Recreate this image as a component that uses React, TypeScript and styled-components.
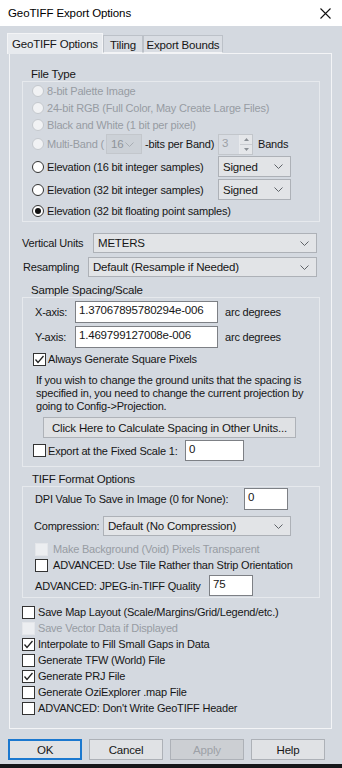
import React from "react";
import styled, { createGlobalStyle } from "styled-components";

const BG = "#d4d9e0";

const GlobalStyle = createGlobalStyle`
  html, body {
    margin: 0;
    padding: 0;
  }
  body {
    background: ${BG};
    font-family: "Liberation Sans", Arial, sans-serif;
    font-size: 11px;
    letter-spacing: -0.2px;
    color: #161616;
  }
  * {
    box-sizing: border-box;
  }
`;

const Window = styled.div`
  width: 342px;
  height: 768px;
  display: flex;
  flex-direction: column;
  overflow: hidden;
  background: ${BG};
`;

const TitleBar = styled.div`
  height: 26px;
  flex: none;
  background: #fff;
  display: flex;
  align-items: center;
  justify-content: space-between;
  padding: 0 11px 0 8px;
`;

const TitleText = styled.span`
  font-size: 11.5px;
  letter-spacing: -0.1px;
  color: #000;
`;

const Body = styled.div`
  flex: none;
  padding: 7px 0 0 9px;
`;

const TabStrip = styled.div`
  height: 20px;
  display: flex;
  align-items: flex-end;
`;

const Tab = styled.div<{ $active?: boolean; $w: number }>`
  width: ${(p) => p.$w}px;
  height: ${(p) => (p.$active ? 21 : 18)}px;
  margin-left: ${(p) => (p.$active ? -2 : 0)}px;
  margin-bottom: ${(p) => (p.$active ? -1 : 0)}px;
  position: relative;
  z-index: ${(p) => (p.$active ? 1 : 0)};
  background: ${(p) => (p.$active ? "#e7eaee" : "#d9dde3")};
  border: 1px solid ${(p) => (p.$active ? "#f3f4f6" : "#bcc1c8")};
  border-bottom: ${(p) => (p.$active ? "none" : "1px solid #f3f4f6")};
  display: flex;
  align-items: center;
  justify-content: center;
  font-size: 11.5px;
  padding-top: ${(p) => (p.$active ? 0 : 1)}px;
`;

const Panel = styled.div`
  width: 323px;
  height: 676px;
  border: 1px solid #f3f4f6;
  padding: 13px 11px 0 12px;
  display: flex;
  flex-direction: column;
`;

const GroupTitle = styled.div<{ $mt?: number; $pl?: number }>`
  height: 14px;
  line-height: 14px;
  margin-top: ${(p) => p.$mt ?? 0}px;
  padding-left: ${(p) => p.$pl ?? 9}px;
  font-size: 11.5px;
`;

const GroupBox = styled.div<{ $h: number; $pl: number; $pt?: number }>`
  width: 298px;
  height: ${(p) => p.$h}px;
  border: 1px solid #e6e9ed;
  padding: ${(p) => p.$pt ?? 0}px 0 0 ${(p) => p.$pl}px;
  display: flex;
  flex-direction: column;
`;

const Row = styled.div<{ $h: number; $mt?: number; $gap?: number }>`
  height: ${(p) => p.$h}px;
  margin-top: ${(p) => p.$mt ?? 0}px;
  display: flex;
  align-items: center;
  gap: ${(p) => p.$gap ?? 0}px;
  flex: none;
`;

const Label = styled.span<{ $off?: boolean; $w?: number; $ml?: number }>`
  color: ${(p) => (p.$off ? "#979ca3" : "#161616")};
  white-space: nowrap;
  width: ${(p) => (p.$w ? `${p.$w}px` : "auto")};
  margin-left: ${(p) => p.$ml ?? 0}px;
  flex: none;
`;

const RadioDot = styled.span<{ $on?: boolean; $off?: boolean }>`
  width: 12px;
  height: 12px;
  border-radius: 50%;
  flex: none;
  margin-right: 3px;
  background: ${(p) => (p.$off ? "#f1f2f4" : "#fff")};
  border: 1px solid ${(p) => (p.$off ? "#c4c8cd" : "#333")};
  display: flex;
  align-items: center;
  justify-content: center;
  &::after {
    content: "";
    display: ${(p) => (p.$on ? "block" : "none")};
    width: 6px;
    height: 6px;
    border-radius: 50%;
    background: #111;
  }
`;

const Box = styled.span<{ $off?: boolean; $mr: number }>`
  width: 13px;
  height: 13px;
  flex: none;
  margin-right: ${(p) => p.$mr}px;
  background: ${(p) => (p.$off ? "#eceef1" : "#fff")};
  border: 1px solid ${(p) => (p.$off ? "#e4e6ea" : "#333")};
  display: flex;
  align-items: center;
  justify-content: center;
`;

const SelectBox = styled.div<{ $w: number; $h?: number; $off?: boolean }>`
  width: ${(p) => p.$w}px;
  height: ${(p) => p.$h ?? 20}px;
  flex: none;
  background: ${(p) => (p.$off ? "#ccd1d7" : "#e2e4e7")};
  border: 1px solid ${(p) => (p.$off ? "#c3c7cc" : "#adb1b7")};
  color: ${(p) => (p.$off ? "#8e9399" : "#161616")};
  display: flex;
  align-items: center;
  justify-content: space-between;
  padding: 0 7px 0 4px;
  white-space: nowrap;
  font-size: 11.5px;
`;

const TextBox = styled.div<{ $w: number; $h?: number; $ml?: number }>`
  width: ${(p) => p.$w}px;
  height: ${(p) => p.$h ?? 22}px;
  margin-left: ${(p) => p.$ml ?? 0}px;
  flex: none;
  background: #fff;
  border: 1px solid #7d8085;
  padding: 2px 0 0 3px;
  font-size: 11.5px;
  white-space: nowrap;
`;

const Spinner = styled.div`
  width: 35px;
  height: 21px;
  flex: none;
  margin-left: 6px;
  display: flex;
  border: 1px solid #c2c6cb;
  background: #d8dce2;
`;

const SpinText = styled.div`
  flex: 1;
  color: #9ba0a6;
  padding: 2px 0 0 3px;
  font-size: 11.5px;
`;

const SpinButtons = styled.div`
  width: 13px;
  display: flex;
  flex-direction: column;
  border-left: 1px solid #e8eaed;
`;

const SpinHalf = styled.div`
  flex: 1;
  display: flex;
  align-items: center;
  justify-content: center;
  background: #e4e6e9;
  & + & {
    border-top: 1px solid #c9ccd1;
  }
`;

const Paragraph = styled.div`
  margin: 7px 0 0 3px;
  line-height: 13px;
  white-space: nowrap;
  font-size: 11px;
`;

const WideButton = styled.div`
  width: 253px;
  height: 21px;
  margin: 4px 0 0 10px;
  background: #dfe1e4;
  border: 1px solid #aeb2b8;
  display: flex;
  align-items: center;
  justify-content: center;
  font-size: 11.5px;
  flex: none;
`;

const ButtonBar = styled.div`
  display: flex;
  gap: 7px;
  padding-left: 8px;
  margin-top: 10px;
`;

const DialogButton = styled.div<{ $primary?: boolean; $off?: boolean }>`
  width: 74px;
  height: 21px;
  background: ${(p) => (p.$off ? "#cccfd3" : "#e0e2e5")};
  border: ${(p) => (p.$primary ? "2px solid #1b78cf" : "1px solid #adb1b7")};
  color: ${(p) => (p.$off ? "#9da1a7" : "#161616")};
  display: flex;
  align-items: center;
  justify-content: center;
  font-size: 11.5px;
`;

const Taskbar = styled.div`
  margin-top: auto;
  height: 4px;
  background: #15171a;
`;

const Chevron = ({ off }: { off?: boolean }) => (
  <svg width="9" height="5" viewBox="0 0 9 5">
    <polyline
      points="0.5,0.5 4.5,4.5 8.5,0.5"
      fill="none"
      stroke={off ? "#a9aeb4" : "#5f6368"}
      strokeWidth="1"
    />
  </svg>
);

const CloseIcon = () => (
  <svg width="11" height="11" viewBox="0 0 11 11">
    <path d="M0.5 0.5 L10.5 10.5 M10.5 0.5 L0.5 10.5" stroke="#111" strokeWidth="1.1" />
  </svg>
);

const Tick = () => (
  <svg width="11" height="11" viewBox="0 0 11 11">
    <polyline points="1.5,5.5 4,8.5 9.5,2" fill="none" stroke="#222" strokeWidth="1.3" />
  </svg>
);

const Select = ({ w, value, off, h }: { w: number; value: string; off?: boolean; h?: number }) => (
  <SelectBox $w={w} $off={off} $h={h}>
    <span>{value}</span>
    <Chevron off={off} />
  </SelectBox>
);

const Radio = ({
  text,
  on,
  off,
  w,
}: {
  text: string;
  on?: boolean;
  off?: boolean;
  w?: number;
}) => (
  <>
    <RadioDot $on={on} $off={off} />
    <Label $off={off} $w={w}>
      {text}
    </Label>
  </>
);

const Check = ({
  text,
  on,
  off,
  mr = 2,
  w,
}: {
  text: string;
  on?: boolean;
  off?: boolean;
  mr?: number;
  w?: number;
}) => (
  <>
    <Box $off={off} $mr={mr}>
      {on && <Tick />}
    </Box>
    <Label $off={off} $w={w}>
      {text}
    </Label>
  </>
);

const bottomChecks = [
  { text: "Save Map Layout (Scale/Margins/Grid/Legend/etc.)" },
  { text: "Save Vector Data if Displayed", off: true },
  { text: "Interpolate to Fill Small Gaps in Data", on: true },
  { text: "Generate TFW (World) File" },
  { text: "Generate PRJ File", on: true },
  { text: "Generate OziExplorer .map File" },
  { text: "ADVANCED: Don't Write GeoTIFF Header" },
];

export default function App() {
  return (
    <Window>
      <GlobalStyle />
      <TitleBar>
        <TitleText>GeoTIFF Export Options</TitleText>
        <CloseIcon />
      </TitleBar>
      <Body>
        <TabStrip>
          <Tab $active $w={96}>
            GeoTIFF Options
          </Tab>
          <Tab $w={40}>Tiling</Tab>
          <Tab $w={80}>Export Bounds</Tab>
        </TabStrip>
        <Panel>
          <GroupTitle>File Type</GroupTitle>
          <GroupBox $h={141} $pl={9}>
            <Row $h={17}>
              <Radio text="8-bit Palette Image" off />
            </Row>
            <Row $h={17}>
              <Radio text="24-bit RGB (Full Color, May Create Large Files)" off />
            </Row>
            <Row $h={17}>
              <Radio text="Black and White (1 bit per pixel)" off />
            </Row>
            <Row $h={22}>
              <Radio text="Multi-Band (" off w={59} />
              <Select w={36} value="16" off />
              <Label $ml={3} $w={67}>-bits per Band)</Label>
              <Spinner>
                <SpinText>3</SpinText>
                <SpinButtons>
                  <SpinHalf>
                    <svg width="5" height="3" viewBox="0 0 5 3">
                      <polygon points="0,3 2.5,0 5,3" fill="#8a8f95" />
                    </svg>
                  </SpinHalf>
                  <SpinHalf>
                    <svg width="5" height="3" viewBox="0 0 5 3">
                      <polygon points="0,0 2.5,3 5,0" fill="#8a8f95" />
                    </svg>
                  </SpinHalf>
                </SpinButtons>
              </Spinner>
              <Label $ml={5}>Bands</Label>
            </Row>
            <Row $h={23}>
              <Radio text="Elevation (16 bit integer samples)" w={171} />
              <Select w={73} h={21} value="Signed" />
            </Row>
            <Row $h={23}>
              <Radio text="Elevation (32 bit integer samples)" w={171} />
              <Select w={73} h={21} value="Signed" />
            </Row>
            <Row $h={20}>
              <Radio text="Elevation (32 bit floating point samples)" on />
            </Row>
          </GroupBox>

          <Row $h={20} $mt={11}>
            <Label $w={71}>Vertical Units</Label>
            <Select w={224} value="METERS" />
          </Row>
          <Row $h={20} $mt={4}>
            <Label $w={65} $ml={1}>
              Resampling
            </Label>
            <Select w={229} value="Default (Resample if Needed)" />
          </Row>

          <GroupTitle $mt={6}>Sample Spacing/Scale</GroupTitle>
          <GroupBox $h={170} $pl={10} $pt={3}>
            <Row $h={22}>
              <Label $ml={2} $w={40}>
                X-axis:
              </Label>
              <TextBox $w={143}>1.37067895780294e-006</TextBox>
              <Label $ml={7}>arc degrees</Label>
            </Row>
            <Row $h={22} $mt={3}>
              <Label $ml={2} $w={40}>
                Y-axis:
              </Label>
              <TextBox $w={143}>1.469799127008e-006</TextBox>
              <Label $ml={7}>arc degrees</Label>
            </Row>
            <Row $h={16} $mt={3}>
              <Check text="Always Generate Square Pixels" on />
            </Row>
            <Paragraph>
              If you wish to change the ground units that the spacing is
              <br />
              specified in, you need to change the current projection by
              <br />
              going to Config-&gt;Projection.
            </Paragraph>
            <WideButton>Click Here to Calculate Spacing in Other Units...</WideButton>
            <Row $h={21} $mt={2}>
              <Check text="Export at the Fixed Scale 1:" w={137} />
              <TextBox $w={59} $h={21}>
                0
              </TextBox>
            </Row>
          </GroupBox>

          <GroupTitle $mt={5} $pl={10}>
            TIFF Format Options
          </GroupTitle>
          <GroupBox $h={112} $pl={12} $pt={1}>
            <Row $h={22}>
              <Label $w={209}>DPI Value To Save in Image (0 for None):</Label>
              <TextBox $w={44}>0</TextBox>
            </Row>
            <Row $h={20} $mt={6}>
              <Label $w={69} $ml={-1}>
                Compression:
              </Label>
              <Select w={188} value="Default (No Compression)" />
            </Row>
            <Row $h={16} $mt={5}>
              <Check text="Make Background (Void) Pixels Transparent" off mr={5} />
            </Row>
            <Row $h={16}>
              <Check text="ADVANCED: Use Tile Rather than Strip Orientation" mr={5} />
            </Row>
            <Row $h={21} $mt={2}>
              <Label $w={174}>ADVANCED: JPEG-in-TIFF Quality</Label>
              <TextBox $w={44} $h={21}>
                75
              </TextBox>
            </Row>
          </GroupBox>

          <div style={{ marginTop: 6 }}>
            {bottomChecks.map((c) => (
              <Row $h={16} key={c.text}>
                <Check text={c.text} on={c.on} off={c.off} mr={3} />
              </Row>
            ))}
          </div>
        </Panel>
      </Body>
      <ButtonBar>
        <DialogButton $primary>OK</DialogButton>
        <DialogButton>Cancel</DialogButton>
        <DialogButton $off>Apply</DialogButton>
        <DialogButton>Help</DialogButton>
      </ButtonBar>
      <Taskbar />
    </Window>
  );
}
